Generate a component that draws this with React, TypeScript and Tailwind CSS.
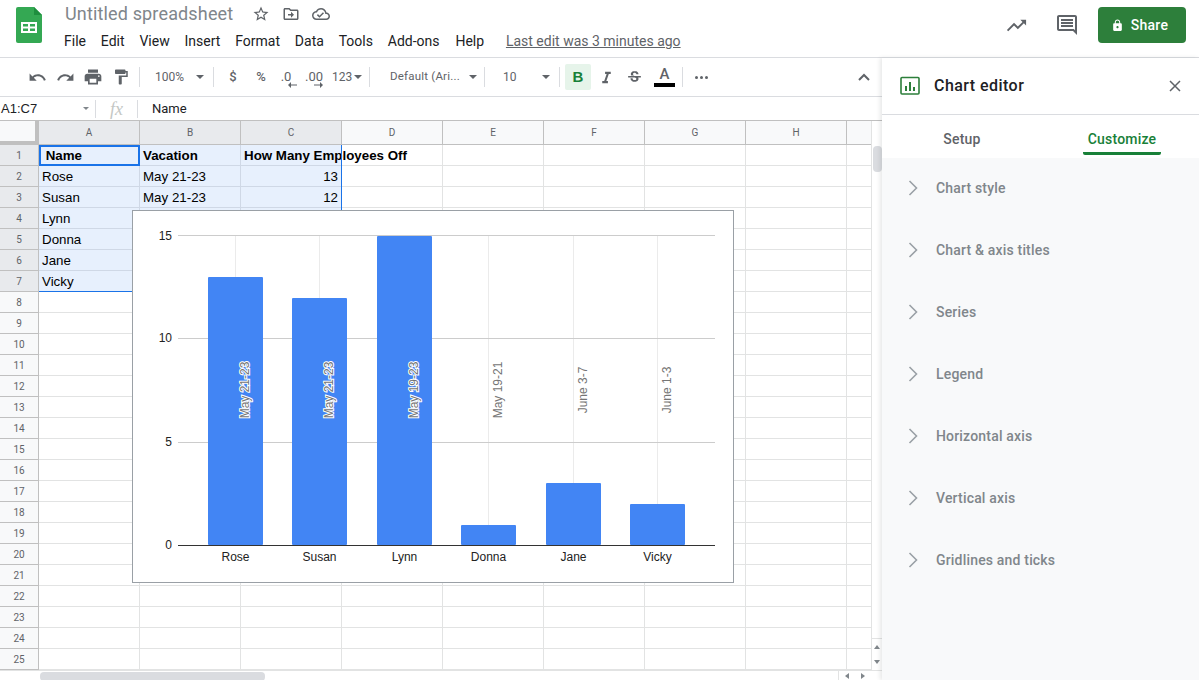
const ui = "font-['Roboto',sans-serif]";

const paths = {
  undo: "M12.5 8c-2.65 0-5.05.99-6.9 2.6L2 7v9h9l-3.62-3.62c1.39-1.16 3.16-1.88 5.12-1.88 3.54 0 6.55 2.31 7.6 5.5l2.37-.78C21.08 11.03 17.15 8 12.5 8z",
  redo: "M18.4 10.6C16.55 8.99 14.15 8 11.5 8c-4.65 0-8.58 3.03-9.96 7.22L3.9 16c1.05-3.19 4.05-5.5 7.6-5.5 1.95 0 3.73.72 5.12 1.88L13 16h9V7l-3.6 3.6z",
  print: "M19 8H5c-1.66 0-3 1.34-3 3v6h4v4h12v-4h4v-6c0-1.66-1.34-3-3-3zm-3 11H8v-5h8v5zm3-7c-.55 0-1-.45-1-1s.45-1 1-1 1 .45 1 1-.45 1-1 1zm-1-9H6v4h12V3z",
  paint: "M18 4V3c0-.55-.45-1-1-1H5c-.55 0-1 .45-1 1v4c0 .55.45 1 1 1h12c.55 0 1-.45 1-1V6h1v4H9v11c0 .55.45 1 1 1h2c.55 0 1-.45 1-1v-9h8V4h-3z",
  star: "M22 9.24l-7.19-.62L12 2 9.19 8.63 2 9.24l5.46 4.73L5.82 21 12 17.27 18.18 21l-1.63-7.03L22 9.24zM12 15.4l-3.76 2.27 1-4.28-3.32-2.88 4.38-.38L12 6.1l1.71 4.04 4.38.38-3.32 2.88 1 4.28L12 15.4z",
  folder: "M20 6h-8l-2-2H4c-1.1 0-2 .9-2 2v12c0 1.1.9 2 2 2h16c1.1 0 2-.9 2-2V8c0-1.1-.9-2-2-2zm0 12H4V6h5.17l2 2H20v10zm-8-1l4-4-4-4v3H8v2h4v3z",
  cloud: "M19.35 10.04C18.67 6.59 15.64 4 12 4 9.11 4 6.6 5.64 5.35 8.04 2.34 8.36 0 10.91 0 14c0 3.31 2.69 6 6 6h13c2.76 0 5-2.24 5-5 0-2.64-2.05-4.78-4.65-4.96zM19 18H6c-2.21 0-4-1.79-4-4 0-2.05 1.53-3.76 3.56-3.97l1.07-.11.5-.95C8.08 7.14 9.94 6 12 6c2.62 0 4.88 1.86 5.39 4.43l.3 1.5 1.53.11c1.56.1 2.78 1.41 2.78 2.96 0 1.65-1.35 3-3 3zm-9-3.82l-2.09-2.09L6.5 13.5 10 17l6.01-6.01-1.41-1.41z",
  trend: "M16 6l2.29 2.29-4.88 4.88-4-4L2 16.59 3.41 18l6-6 4 4 6.3-6.29L22 12V6z",
  comment: "M20 2H4c-1.1 0-2 .9-2 2v12c0 1.1.9 2 2 2h14l4 4V4c0-1.1-.9-2-2-2zm0 15.17L18.83 16H4V4h16v13.17zM6 12h12v2H6zm0-3h12v2H6zm0-3h12v2H6z",
  lock: "M18 8h-1V6c0-2.76-2.24-5-5-5S7 3.24 7 6v2H6c-1.1 0-2 .9-2 2v10c0 1.1.9 2 2 2h12c1.1 0 2-.9 2-2V10c0-1.1-.9-2-2-2zm-6 9c-1.1 0-2-.9-2-2s.9-2 2-2 2 .9 2 2-.9 2-2 2zm3.1-9H8.9V6c0-1.71 1.39-3.1 3.1-3.1 1.71 0 3.1 1.39 3.1 3.1v2z",
  italic: "M10 4v3h2.21l-3.42 10H6v3h8v-3h-2.21l3.42-10H18V4z",
  strike: "M7.24 8.75c-.26-.48-.39-1.03-.39-1.67 0-.61.13-1.16.4-1.67.26-.5.63-.93 1.11-1.29.48-.35 1.05-.63 1.7-.83.66-.19 1.39-.29 2.18-.29.81 0 1.54.11 2.21.34.66.22 1.23.54 1.69.94.47.4.83.88 1.08 1.43.25.55.38 1.15.38 1.81h-3.01c0-.31-.05-.59-.15-.85-.09-.27-.24-.49-.44-.68-.2-.19-.45-.33-.75-.44-.3-.1-.66-.16-1.06-.16-.39 0-.74.04-1.03.13-.29.09-.53.21-.72.36-.19.16-.34.34-.44.55-.1.21-.15.43-.15.66 0 .48.25.88.74 1.21.38.25.77.48 1.41.7H7.39c-.05-.08-.11-.17-.15-.25zM21 12v-2H3v2h9.62c.18.07.4.14.55.2.37.17.66.34.87.51.21.17.35.36.43.57.07.2.11.43.11.69 0 .23-.05.45-.14.66-.09.2-.23.38-.42.53-.19.15-.42.26-.71.35-.29.08-.63.13-1.01.13-.43 0-.83-.04-1.18-.13s-.66-.23-.91-.42c-.25-.19-.45-.44-.59-.75-.14-.31-.25-.76-.25-1.21H6.4c0 .55.08 1.13.24 1.58.16.45.37.85.65 1.21.28.35.6.66.98.92.37.26.78.48 1.22.65.44.17.9.3 1.38.39.48.08.96.13 1.44.13.8 0 1.53-.09 2.18-.28s1.21-.45 1.67-.79c.46-.34.82-.77 1.07-1.27s.38-1.07.38-1.71c0-.6-.1-1.14-.31-1.61-.05-.11-.11-.23-.17-.33H21z",
};

function Icon({ d, size = 20, className = "fill-[#5f6368]" }: { d: string; size?: number; className?: string }) {
  return (
    <svg width={size} height={size} viewBox="0 0 24 24" className={className}>
      <path d={d} />
    </svg>
  );
}

function Caret() {
  return <div className="w-0 h-0 border-x-[4px] border-x-transparent border-t-[4px] border-t-[#5f6368]" />;
}

function Sep() {
  return <div className="w-px h-[20px] bg-[#dadce0] shrink-0" />;
}

function Tool({ children }: { children: React.ReactNode }) {
  return <div className="w-[28px] h-[26px] shrink-0 flex items-center justify-center text-[#5f6368]">{children}</div>;
}

function Header() {
  return (
    <div className="h-[58px] shrink-0 border-b border-[#dadce0] flex relative">
      <svg width="26" height="36" viewBox="0 0 26 36" className="ml-[16px] mt-[7px] shrink-0">
        <path d="M2 0h16l8 8v26a2 2 0 0 1-2 2H2a2 2 0 0 1-2-2V2a2 2 0 0 1 2-2z" fill="#34a853" />
        <path d="M18 0l8 8h-8z" fill="#1e8e3e" />
        <path d="M5 15h16v11H5z" fill="#fff" />
        <path d="M7 17h5v2.5H7zM14 17h5v2.5h-5zM7 21.5h5V24H7zM14 21.5h5V24h-5z" fill="#34a853" />
      </svg>
      <div className="ml-[22px] flex flex-col">
        <div className="flex items-center h-[28px]">
          <span className="ml-[1px] text-[18px] text-[#80868b] leading-[28px] tracking-[0.15px]">Untitled spreadsheet</span>
          <div className="ml-[19px] flex items-center gap-[12px]">
            <Icon d={paths.star} size={18} />
            <Icon d={paths.folder} size={18} />
            <Icon d={paths.cloud} size={18} />
          </div>
        </div>
        <div className="flex items-center h-[24px] mt-[1px] text-[14px] text-[#202124] gap-[14.85px]">
          <span>File</span>
          <span>Edit</span>
          <span>View</span>
          <span>Insert</span>
          <span>Format</span>
          <span>Data</span>
          <span>Tools</span>
          <span>Add-ons</span>
          <span className="ml-[1px]">Help</span>
          <span className="ml-[7px] text-[#5f6368] underline">Last edit was 3 minutes ago</span>
        </div>
      </div>
      <div className="ml-auto flex items-start pt-[7px] pr-[13px]">
        <div className="mt-[7px] mr-[27px]"><Icon d={paths.trend} size={23} /></div>
        <div className="mt-[6px] mr-[19px]"><Icon d={paths.comment} size={24} /></div>
        <div className="w-[88px] h-[36px] pr-[5px] bg-[#2d7f3b] rounded-[4px] flex items-center justify-center gap-[7px] text-white text-[14px] font-medium tracking-[0.25px]">
          <Icon d={paths.lock} size={13} className="fill-white" />
          <span>Share</span>
        </div>
      </div>
    </div>
  );
}

function Toolbar() {
  return (
    <div className="h-[39px] shrink-0 border-b border-[#dadce0] flex items-center pl-[23px] text-[12px] text-[#5f6368]">
      <Tool><Icon d={paths.undo} size={19} /></Tool>
      <Tool><Icon d={paths.redo} size={19} /></Tool>
      <Tool><Icon d={paths.print} size={20} /></Tool>
      <Tool><Icon d={paths.paint} size={18} /></Tool>
      <div className="w-[4px]" />
      <Sep />
      <div className="w-[73px] flex items-center pl-[15px]">
        <span className="w-[41px] text-[12px]">100%</span>
        <Caret />
      </div>
      <Sep />
      <div className="w-[5px]" />
      <Tool><span className="text-[13px] font-medium">$</span></Tool>
      <Tool><span className="text-[13px] font-medium">%</span></Tool>
      <div className="w-[22px] h-[26px] shrink-0 flex items-center justify-center">
        <span className="relative text-[13px]">
          .0
          <svg width="9" height="6" viewBox="0 0 9 6" className="absolute left-[7px] top-[15px] fill-[#5f6368]">
            <path d="M9 2.4v1.2H3V6L0 3l3-3v2.4z" />
          </svg>
        </span>
      </div>
      <div className="w-[34px] h-[26px] shrink-0 flex items-center justify-center">
        <span className="relative text-[13px]">
          .00
          <svg width="9" height="6" viewBox="0 0 9 6" className="absolute left-[9px] top-[15px] fill-[#5f6368]">
            <path d="M0 2.4v1.2h6V6l3-3-3-3v2.4z" />
          </svg>
        </span>
      </div>
      <div className="flex items-center gap-[2px] pl-[1px] w-[38px]">
        <span className="text-[12px]">123</span>
        <Caret />
      </div>
      <Sep />
      <div className="w-[114px] flex items-center pl-[17px]">
        <span className="w-[82px] text-[11.5px] tracking-[0.2px] pl-[3px] whitespace-nowrap">Default (Ari...</span>
        <Caret />
      </div>
      <Sep />
      <div className="w-[74px] flex items-center pl-[18px]">
        <span className="w-[39px] text-[12px]">10</span>
        <Caret />
      </div>
      <Sep />
      <div className="w-[5px]" />
      <div className="w-[26px] h-[26px] rounded-[2px] bg-[#e6f4ea] flex items-center justify-center text-[#188038] text-[15px] font-bold shrink-0 font-['Liberation_Sans',sans-serif]">B</div>
      <div className="w-[1px]" />
      <Tool><Icon d={paths.italic} size={17} /></Tool>
      <Tool><Icon d={paths.strike} size={17} /></Tool>
      <div className="w-[29px] ml-[2px] h-[26px] shrink-0 flex items-center justify-center">
        <div className="flex flex-col items-center">
          <span className="text-[15px] leading-[15px] font-medium">A</span>
          <div className="w-[21px] h-[4px] bg-black mt-[1px]" />
        </div>
      </div>
      <div className="w-[3px]" />
      <Sep />
      <div className="w-[12px]" />
      <div className="flex gap-[2px]">
        <div className="w-[3px] h-[3px] rounded-full bg-[#5f6368]" />
        <div className="w-[3px] h-[3px] rounded-full bg-[#5f6368]" />
        <div className="w-[3px] h-[3px] rounded-full bg-[#5f6368]" />
      </div>
      <svg width="14" height="9" viewBox="0 0 14 9" className="ml-auto mr-[11px] fill-none stroke-[#5f6368] stroke-2">
        <path d="M2 7l5-5 5 5" />
      </svg>
    </div>
  );
}

function FormulaBar() {
  return (
    <div className="h-[24px] shrink-0 border-b border-[#c0c0c0] flex items-center text-[13px]">
      <div className="w-[95px] flex items-center pl-[1px] text-[#202124] font-['Liberation_Sans',sans-serif]">
        <span className="w-[82px]">A1:C7</span>
        <div className="w-0 h-0 border-x-[3px] border-x-transparent border-t-[3px] border-t-[#80868b]" />
      </div>
      <div className="w-px h-[18px] bg-[#dadce0]" />
      <span className="w-[41px] text-center text-[18px] italic text-[#c4c7c5] font-['Liberation_Serif',serif] leading-[20px]">fx</span>
      <div className="w-px h-[18px] bg-[#dadce0]" />
      <span className="ml-[14px] text-[#202124]">Name</span>
    </div>
  );
}

const columns = ["A", "B", "C", "D", "E", "F", "G", "H"];

type Row = { a: string; b: string; c: string; bold?: boolean };

const data: Row[] = [
  { a: " Name", b: "Vacation", c: "How Many Employees Off", bold: true },
  { a: "Rose", b: "May 21-23", c: "13" },
  { a: "Susan", b: "May 21-23", c: "12" },
  { a: "Lynn", b: "May 19-23", c: "15" },
  { a: "Donna", b: "May 19-21", c: "1" },
  { a: "Jane", b: "June 3-7", c: "3" },
  { a: "Vicky", b: "June 1-3", c: "2" },
];

function SheetGrid() {
  const rows = Array.from({ length: 25 }, (_, i) => i);
  return (
    <div className="flex-1 relative overflow-hidden flex flex-col font-['Liberation_Sans',sans-serif] text-[13.33px] text-black">
      <div className="flex h-[24px] shrink-0 border-b border-[#c0c0c0]">
        <div className="w-[39px] shrink-0 border-r-[4px] border-b-[4px] border-[#c0c0c0] h-[24px] bg-[#f8f9fa]" />
        {columns.map((c, i) => (
          <div
            key={c}
            className={`w-[101px] shrink-0 border-r border-[#c0c0c0] flex items-center justify-center text-[10px] text-[#5f6368] font-['Roboto',sans-serif] ${i < 3 ? "bg-[#e8eaed]" : "bg-[#f8f9fa]"}`}
          >
            {c}
          </div>
        ))}
        <div className="w-[25px] shrink-0 border-r border-[#c0c0c0] bg-[#f8f9fa]" />
        <div className="flex-1 bg-[#f8f9fa]" />
      </div>
      {rows.map((r) => {
        const row = data[r];
        const selected = r < 7;
        const cell = selected ? "bg-[#e7f0fd] border-[#cfd8e6]" : "border-[#e2e3e3]";
        return (
          <div key={r} className="flex h-[21px] shrink-0">
            <div
              className={`w-[39px] shrink-0 border-r border-b border-[#c0c0c0] flex items-center justify-center text-[10px] text-[#5f6368] font-['Roboto',sans-serif] ${selected ? "bg-[#e8eaed]" : "bg-[#f8f9fa]"}`}
            >
              {r + 1}
            </div>
            {columns.map((c, i) => (
              <div
                key={c}
                className={`w-[101px] shrink-0 border-r border-b px-[3px] pt-[1px] flex items-center whitespace-pre ${i < 3 ? cell : "border-[#e2e3e3]"} ${row?.bold ? "font-bold" : ""} ${i === 2 && !row?.bold ? "justify-end" : ""}`}
              >
                {row && i === 0 ? row.a : ""}
                {row && i === 1 ? row.b : ""}
                {row && i === 2 ? row.c : ""}
              </div>
            ))}
            <div className="w-[25px] shrink-0 border-r border-b border-[#e2e3e3]" />
          </div>
        );
      })}
      <div className="absolute left-[39px] top-[24px] w-[303px] h-[147px] border-r border-b border-[#1a73e8] pointer-events-none" />
      <div className="absolute left-[39px] top-[24px] w-[101px] h-[21px] border-2 border-[#1a73e8] pointer-events-none" />
      <Chart />
      <div className="absolute right-0 top-0 bottom-0 w-[11px] border-l border-[#e2e3e3] bg-white">
        <div className="absolute left-[1px] top-[25px] w-[9px] h-[26px] rounded-[4px] bg-[#dadce0]" />
        <div className="absolute bottom-[10px] left-0 w-full h-[32px] flex flex-col items-center justify-around border-t border-[#e2e3e3]">
          <div className="w-0 h-0 border-x-[3px] border-x-transparent border-b-[4px] border-b-[#80868b]" />
          <div className="w-0 h-0 border-x-[3px] border-x-transparent border-t-[4px] border-t-[#80868b]" />
        </div>
      </div>
      <div className="absolute left-0 right-0 bottom-0 h-[10px] border-t border-[#e2e3e3] bg-white">
        <div className="absolute left-[40px] top-[1px] w-[225px] h-[9px] rounded-[4px] bg-[#dadce0]" />
        <div className="absolute left-[838px] top-0 w-[33px] h-full flex items-center justify-around border-l border-[#e2e3e3]">
          <div className="w-0 h-0 border-y-[3px] border-y-transparent border-r-[4px] border-r-[#80868b]" />
          <div className="w-0 h-0 border-y-[3px] border-y-transparent border-l-[4px] border-l-[#80868b]" />
        </div>
      </div>
    </div>
  );
}

const bars = [
  { name: "Rose", x: 208, top: 277, label: "May 21-23", lx: 249 },
  { name: "Susan", x: 292, top: 298, label: "May 21-23", lx: 333 },
  { name: "Lynn", x: 377, top: 236, label: "May 19-23", lx: 418 },
  { name: "Donna", x: 461, top: 525, label: "May 19-21", lx: 502 },
  { name: "Jane", x: 546, top: 483, label: "June 3-7", lx: 587 },
  { name: "Vicky", x: 630, top: 504, label: "June 1-3", lx: 671 },
];

function Chart() {
  return (
    <div className="absolute left-[132px] top-[89px] w-[602px] h-[373px] bg-white border border-[#9aa0a6]">
      <svg width="600" height="371" viewBox="133 211 600 371" className="font-['Liberation_Sans',sans-serif] text-[12px]">
        {bars.map((b) => (
          <line key={b.name} x1={b.x + 27.5} x2={b.x + 27.5} y1="236" y2="545" stroke="#ebebeb" />
        ))}
        {[235.5, 338.5, 442.5].map((y) => (
          <line key={y} x1="178" x2="715" y1={y} y2={y} stroke="#cccccc" />
        ))}
        {[
          ["15", 239.5],
          ["10", 342],
          ["5", 446],
          ["0", 549],
        ].map(([t, y]) => (
          <text key={t} x="172" y={y} textAnchor="end" fill="#222">
            {t}
          </text>
        ))}
        {bars.map((b) => (
          <rect key={b.name} x={b.x} y={b.top} width="55" height={545 - b.top} rx="1" fill="#4285f4" />
        ))}
        <line x1="178" x2="715" y1="545.5" y2="545.5" stroke="#333" />
        {bars.map((b) => (
          <text
            key={b.name}
            transform={`translate(${b.lx} 390) rotate(-90)`}
            textAnchor="middle"
            fill="#757575"
            stroke="#fff"
            strokeWidth="2"
            paintOrder="stroke"
          >
            {b.label}
          </text>
        ))}
        {bars.map((b) => (
          <text key={b.name} x={b.x + 27.5} y="561" textAnchor="middle" fill="#222">
            {b.name}
          </text>
        ))}
      </svg>
    </div>
  );
}

const sections = ["Chart style", "Chart & axis titles", "Series", "Legend", "Horizontal axis", "Vertical axis", "Gridlines and ticks"];

function ChartEditor() {
  return (
    <div className="w-[317px] shrink-0 relative z-10 flex flex-col bg-white shadow-[-2px_0_4px_rgba(60,64,67,0.12)]">
      <div className="h-[57px] shrink-0 border-b border-[#dadce0] flex items-center pl-[18px] pr-[18px]">
        <svg width="20" height="20" viewBox="0 0 20 20" className="shrink-0">
          <rect x="1" y="1.5" width="18" height="16.5" rx="1" fill="none" stroke="#2d7f3b" strokeWidth="1.6" />
          <path d="M5 10h2v5H5zM9 6h2v9H9zM13 11h2v4h-2z" fill="#2d7f3b" />
        </svg>
        <span className="ml-[14px] text-[16px] font-medium text-[#202124] tracking-[0.45px]">Chart editor</span>
        <svg width="12" height="12" viewBox="0 0 12 12" className="ml-auto stroke-[#5f6368] stroke-[1.5]">
          <path d="M1 1l10 10M11 1L1 11" />
        </svg>
      </div>
      <div className="h-[43px] shrink-0 flex text-[14px] font-medium tracking-[0.2px]">
        <div className="w-[160px] flex items-center justify-center pt-[6px] text-[#5f6368]">Setup</div>
        <div className="w-[78px] ml-[41px] flex items-center justify-center pt-[12px] text-[#188038] border-b-[3px] border-[#188038] rounded-b-[2px] h-[40px]">
          Customize
        </div>
      </div>
      <div className="flex-1 bg-[#f8f9fa] flex flex-col">
        {sections.map((s) => (
          <div key={s} className="h-[62px] shrink-0 flex items-center pb-[2px] pl-[26px] text-[14px] font-medium tracking-[0.18px] text-[#80868b]">
            <svg width="10" height="16" viewBox="0 0 10 16" className="fill-none stroke-[#9aa0a6] stroke-[1.6]">
              <path d="M1.5 1l7 7-7 7" />
            </svg>
            <span className="ml-[18px]">{s}</span>
          </div>
        ))}
      </div>
    </div>
  );
}

export default function App() {
  return (
    <div className={`w-[1199px] h-[680px] overflow-hidden bg-white flex flex-col ${ui}`}>
      <Header />
      <div className="flex-1 flex min-h-0">
        <div className="flex-1 min-w-0 flex flex-col">
          <Toolbar />
          <FormulaBar />
          <SheetGrid />
        </div>
        <ChartEditor />
      </div>
    </div>
  );
}
